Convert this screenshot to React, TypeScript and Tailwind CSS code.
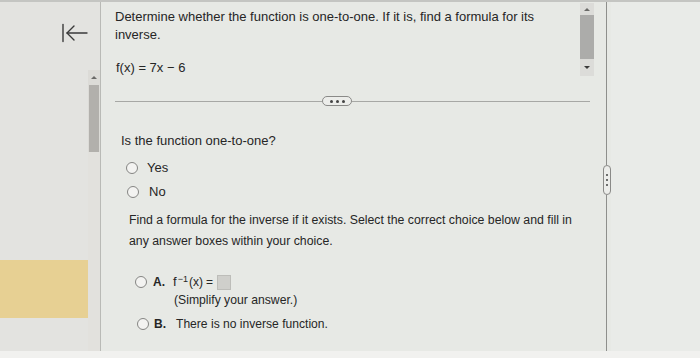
import React from 'react';

function Radio() {
  return <span className="inline-block w-[12px] h-[12px] rounded-full border-[1.5px] border-[#858583] bg-[#f3f3f1] shrink-0" />;
}

function BackIcon() {
  return (
    <svg width="27" height="20" viewBox="0 0 27 20" fill="none" stroke="#3a3a3a" strokeWidth="1.4" strokeLinecap="round" strokeLinejoin="round">
      <line x1="2" y1="1.5" x2="2" y2="18.5" />
      <line x1="6" y1="10" x2="26" y2="10" />
      <polyline points="13,3 6,10 13,17" />
    </svg>
  );
}

export default function App() {
  return (
    <div className="w-[700px] h-[358px] overflow-hidden flex flex-col bg-[#e7e9e5] text-[#262626] font-['Liberation_Sans',Arial,sans-serif] text-[13px]">
      {/* top edge */}
      <div className="h-[2px] bg-[#c4c5c2] shrink-0" />
      <div className="flex flex-1 min-h-0">
        {/* Left column */}
        <div className="w-[101px] shrink-0 flex border-r border-[#b9bab6] bg-[#e3e3e0]">
          <div className="flex-1 flex flex-col">
            <div className="mt-[21px] ml-[61px]">
              <BackIcon />
            </div>
            <div className="mt-[217px] h-[58px] bg-[#e7d093]" />
          </div>
          <div className="w-[13px] flex flex-col">
            <div className="h-[68px]" />
            <div className="flex-1 flex flex-col bg-[#dcdbd7]">
              <div className="h-[15px] flex items-center justify-center">
                <span className="w-0 h-0 border-l-[3px] border-r-[3px] border-b-[3px] border-l-transparent border-r-transparent border-b-[#6a6a68]" />
              </div>
              <div className="h-[67px] bg-[#b2b0ac] mx-[1px]" />
              <div className="flex-1 bg-[#e2e1dd]" />
            </div>
          </div>
        </div>

        {/* Main */}
        <div className="w-[501px] shrink-0 flex flex-col">
          {/* Top pane */}
          <div className="flex">
            <div className="flex-1 pl-[14px] pt-[6px] leading-[18px]">
              <p>Determine whether the function is one-to-one. If it is, find a formula for its</p>
              <p>inverse.</p>
              <p className="mt-[15px] pl-[1px]">f(x) = 7x − 6</p>
            </div>
            <div className="w-[14px] h-[73px] mt-[1px] mr-[8px] bg-[#dcdcd9] flex flex-col items-center">
              <div className="h-[12px] flex items-center">
                <span className="w-0 h-0 border-l-[3px] border-r-[3px] border-b-[3px] border-l-transparent border-r-transparent border-b-[#6a6a68]" />
              </div>
              <div className="w-full h-[44px] bg-[#acacaa]" />
              <div className="flex-1 flex items-center">
                <span className="w-0 h-0 border-l-[3px] border-r-[3px] border-t-[3px] border-l-transparent border-r-transparent border-t-[#3a3a3a]" />
              </div>
            </div>
          </div>
          {/* Divider */}
          <div className="mt-[19px] ml-[14px] mr-[12px] flex items-center h-[10px]">
            <div className="w-[207px] h-px bg-[#a7a8a5]" />
            <div className="w-[30px] h-[10px] rounded-full border border-[#8a8a88] bg-[#ecedea] flex items-center justify-center gap-[3px]">
              <span className="w-[3px] h-[3px] rounded-full bg-[#444]" />
              <span className="w-[3px] h-[3px] rounded-full bg-[#444]" />
              <span className="w-[3px] h-[3px] rounded-full bg-[#444]" />
            </div>
            <div className="flex-1 h-px bg-[#a7a8a5]" />
          </div>

          {/* Bottom pane */}
          <div className="pl-[20px] leading-[18px]">
            <p className="mt-[26px]">Is the function one-to-one?</p>
            <div className="mt-[9px] ml-[5px] flex items-center h-[18px]">
              <Radio />
              <span className="ml-[9px]">Yes</span>
            </div>
            <div className="mt-[6px] ml-[6px] flex items-center h-[18px]">
              <Radio />
              <span className="ml-[10px]">No</span>
            </div>
            <div className="mt-[9px] ml-[8px] leading-[21px] text-[12.3px]">
              <p>Find a formula for the inverse if it exists. Select the correct choice below and fill in</p>
              <p>any answer boxes within your choice.</p>
            </div>
            <div className="mt-[21px] ml-[14px] flex items-center h-[18px]">
              <Radio />
              <span className="ml-[6px] font-bold text-[12px]">A.</span>
              <span className="ml-[8px]">f</span>
              <span className="text-[9px] -mt-[7px] ml-[1px]">−1</span>
              <span className="ml-[1px] text-[12px]">(x)</span>
              <span className="ml-[3px] text-[12px]">=</span>
              <span className="ml-[4px] w-[14px] h-[15px] bg-[#cfcfcb] border border-[#bdbdb9]" />
            </div>
            <p className="ml-[53px] text-[12.2px]">(Simplify your answer.)</p>
            <div className="mt-[6px] ml-[16px] flex items-center h-[18px]">
              <Radio />
              <span className="ml-[5px] font-bold text-[12px]">B.</span>
              <span className="ml-[10px] text-[12.1px]">There is no inverse function.</span>
            </div>
          </div>
        </div>

        {/* Vertical splitter */}
        <div className="w-[9px] shrink-0 flex flex-col items-center">
          <div className="h-[163px] w-px bg-[#8e8f8c]" />
          <div className="w-[8px] h-[30px] rounded-full border border-[#8a8a88] bg-[#ecedea] flex flex-col items-center justify-center gap-[3px]">
            <span className="w-[2px] h-[2px] rounded-full bg-[#444]" />
            <span className="w-[2px] h-[2px] rounded-full bg-[#444]" />
            <span className="w-[2px] h-[2px] rounded-full bg-[#444]" />
          </div>
          <div className="flex-1 w-px bg-[#8e8f8c]" />
        </div>

        {/* Right area */}
        <div className="flex-1 bg-[#e9ebe8]" />
      </div>
      {/* bottom edge */}
      <div className="h-[7px] bg-[#f1f1ef] shrink-0" />
    </div>
  );
}
